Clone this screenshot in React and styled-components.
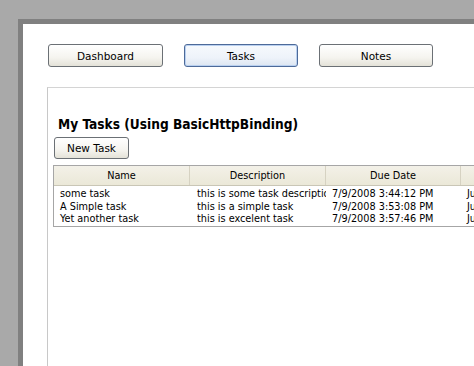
import React from 'react';
import styled, { createGlobalStyle } from 'styled-components';

const GlobalStyle = createGlobalStyle`
    html, body {
        margin: 0;
        padding: 0;
        height: 100%;
        overflow: hidden;
        background: #a9a9a9;
    }
    #root {
        height: 100%;
    }
`;

const tasks = [
    { id: 1, name: 'some task', description: 'this is some task description', due: '7/9/2008 3:44:12 PM', extra: 'Jul' },
    { id: 2, name: 'A Simple task', description: 'this is a simple task', due: '7/9/2008 3:53:08 PM', extra: 'Jul' },
    { id: 3, name: 'Yet another task', description: 'this is excelent task', due: '7/9/2008 3:57:46 PM', extra: 'Jul' },
];

const Desktop = styled.div`
    height: 100%;
    box-sizing: border-box;
    padding: 19px 0 0 18px;
    display: flex;
`;

const Frame = styled.div`
    flex: 1;
    background: #ffffff;
    border-top: 5px solid #808080;
    border-left: 5px solid #808080;
    padding: 20px 0 0 25px;
    display: flex;
    flex-direction: column;
    font-family: 'DejaVu Sans', sans-serif;
`;

const Nav = styled.div`
    display: flex;
    gap: 21px;
`;

const Button = styled.button`
    box-sizing: border-box;
    width: ${(props) => props.w || 114}px;
    height: ${(props) => props.h || 23}px;
    border-radius: 3px;
    border: 1px solid ${(props) => (props.active ? '#4d6a99' : '#6b7075')};
    background: ${(props) =>
        props.active
            ? 'linear-gradient(#f6f9fd, #eef3fa 60%, #dde6f2)'
            : 'linear-gradient(#ffffff, #f5f4ef 60%, #e4e2d8)'};
    box-shadow: ${(props) => (props.active ? 'inset 0 0 0 1px #b9d0f0' : 'none')};
    font-family: 'DejaVu Sans', sans-serif;
    font-size: 10.5px;
    color: #000;
    padding: 0;
`;

const Panel = styled.div`
    flex: 1;
    margin: 20px 0 0 -1px;
    border-top: 1px solid #d4d4d4;
    border-left: 1px solid #c8c8c8;
    padding: 27px 0 0 6px;
`;

const Title = styled.h2`
    margin: 0 0 4px 4px;
    font-family: 'DejaVu Sans Condensed', 'DejaVu Sans', sans-serif;
    font-stretch: condensed;
    font-size: 13.6px;
    font-weight: bold;
    line-height: 18px;
    color: #000;
    white-space: nowrap;
`;

const Table = styled.div`
    margin: 6px 0 0 -1px;
    border: 1px solid #a6a6a6;
    border-right: none;
    width: 500px;
    font-family: 'DejaVu Sans Condensed', 'DejaVu Sans', sans-serif;
    font-stretch: condensed;
    font-size: 10.8px;
    color: #000;
`;

const HeadRow = styled.div`
    display: grid;
    grid-template-columns: 136px 136px 135px 1fr;
    height: 19px;
    background: linear-gradient(#f3f1e8, #ebe8d8);
    border-bottom: 1px solid #c9c6b6;
`;

const HeadCell = styled.div`
    text-align: center;
    line-height: 19px;
    border-right: 1px solid #d6d2c2;
    overflow: hidden;
    white-space: nowrap;
`;

const Body = styled.div`
    padding: 2px 0 0;
`;

const Row = styled.div`
    display: grid;
    grid-template-columns: 136px 136px 135px 1fr;
    height: 12.5px;
    line-height: 12.5px;
`;

const Cell = styled.div`
    padding-left: ${(props) => props.pl || 6}px;
    padding-right: 5px;
    overflow: hidden;
    white-space: nowrap;
`;

export default function App() {
    return (
        <>
            <GlobalStyle />
            <Desktop>
                <Frame>
                    <Nav>
                        <Button w={115}>Dashboard</Button>
                        <Button active>Tasks</Button>
                        <Button>Notes</Button>
                    </Nav>
                    <Panel>
                        <Title>My Tasks (Using BasicHttpBinding)</Title>
                        <Button w={75} h={22}>New Task</Button>
                        <Table>
                            <HeadRow>
                                <HeadCell>Name</HeadCell>
                                <HeadCell>Description</HeadCell>
                                <HeadCell>Due Date</HeadCell>
                                <HeadCell></HeadCell>
                            </HeadRow>
                            <Body>
                                {tasks.map((t) => (
                                    <Row key={t.id}>
                                        <Cell>{t.name}</Cell>
                                        <Cell pl={7}>{t.description}</Cell>
                                        <Cell pl={6}>{t.due}</Cell>
                                        <Cell>{t.extra}</Cell>
                                    </Row>
                                ))}
                            </Body>
                        </Table>
                    </Panel>
                </Frame>
            </Desktop>
        </>
    );
}
